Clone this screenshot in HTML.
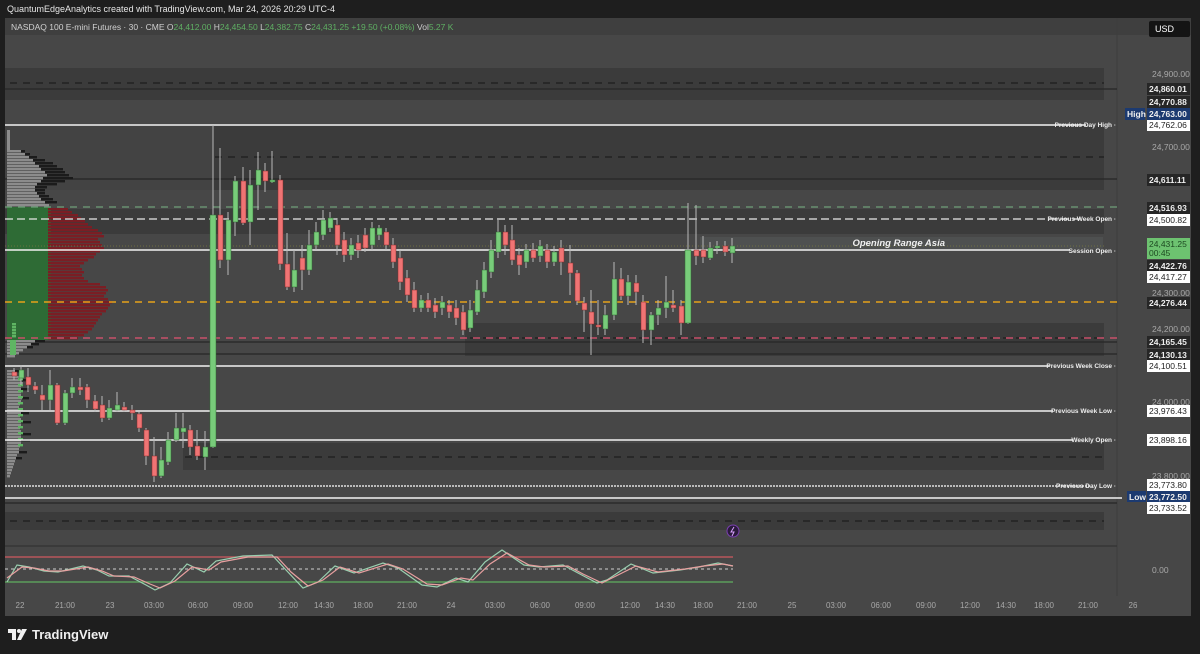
<!DOCTYPE html>
<html><head><meta charset="utf-8"><style>
html,body{margin:0;padding:0;background:#1e1e1e;width:1200px;height:654px;overflow:hidden}
svg{display:block}
text{font-family:"Liberation Sans",sans-serif}
</style></head><body>
<svg width="1200" height="654" viewBox="0 0 1200 654" xmlns="http://www.w3.org/2000/svg">
<rect width="1200" height="654" fill="#1e1e1e"/>
<text x="7" y="12" font-size="9" fill="#e6e6e6">QuantumEdgeAnalytics created with TradingView.com, Mar 24, 2026 20:29 UTC-4</text>
<rect x="5" y="18" width="1186" height="598" fill="#474747"/>
<rect x="5" y="18" width="1186" height="17" fill="#3f3f3f"/>
<text x="11" y="30" font-size="8.5" fill="#d0d0d0">NASDAQ 100 E-mini Futures · 30 · CME  <tspan fill="#ccc">O</tspan><tspan fill="#5fb063">24,412.00</tspan> <tspan fill="#ccc">H</tspan><tspan fill="#5fb063">24,454.50</tspan> <tspan fill="#ccc">L</tspan><tspan fill="#5fb063">24,382.75</tspan> <tspan fill="#ccc">C</tspan><tspan fill="#5fb063">24,431.25 +19.50 (+0.08%)</tspan> <tspan fill="#ccc">Vol</tspan><tspan fill="#5fb063">5.27 K</tspan></text>
<rect x="1149" y="21" width="41" height="16" rx="2" fill="#141414"/>
<text x="1155" y="32" font-size="9" fill="#fff">USD</text>
<line x1="1117" y1="18" x2="1117" y2="596" stroke="#3d3d3d"/>

<g fill="#3b3b3b">
<rect x="5" y="68" width="1099" height="32"/>
<rect x="213" y="126" width="891" height="64"/>
<rect x="5" y="209" width="1099" height="25"/>
<rect x="465" y="323" width="639" height="33"/>
<rect x="183" y="443" width="921" height="27"/>
<rect x="5" y="512" width="1099" height="18"/>
</g>
<rect x="5" y="126" width="208" height="64" fill="#434343"/>
<g stroke="#1e1e1e" stroke-width="1.2" stroke-dasharray="7,6">
<line x1="10" y1="83" x2="1104" y2="83"/>
<line x1="215" y1="157" x2="1104" y2="157"/>
<line x1="470" y1="338" x2="1104" y2="338"/>
<line x1="185" y1="457" x2="1104" y2="457"/>
<line x1="10" y1="521" x2="1104" y2="521"/>
</g>
<g stroke="#262626" stroke-width="1.2">
<line x1="5" y1="89" x2="1117" y2="89"/>
<line x1="5" y1="179" x2="1117" y2="179"/>
<line x1="5" y1="342" x2="1117" y2="342"/>
<line x1="5" y1="354" x2="1117" y2="354"/>
<line x1="5" y1="503" x2="1117" y2="503"/>
</g>

<!-- volume profile -->
<g fill="#8c8c8c">
<rect x="7" y="130" width="3" height="20"/>
<rect x="7" y="150" width="14" height="2.4"/><rect x="7" y="153" width="18" height="2.4"/><rect x="7" y="156" width="22" height="2.4"/><rect x="7" y="159" width="26" height="2.4"/><rect x="7" y="162" width="28" height="2.4"/><rect x="7" y="165" width="32" height="2.4"/><rect x="7" y="168" width="34" height="2.4"/><rect x="7" y="171" width="38" height="2.4"/><rect x="7" y="174" width="40" height="2.4"/><rect x="7" y="177" width="36" height="2.4"/><rect x="7" y="180" width="34" height="2.4"/><rect x="7" y="183" width="30" height="2.4"/><rect x="7" y="186" width="28" height="2.4"/><rect x="7" y="189" width="28" height="2.4"/><rect x="7" y="192" width="30" height="2.4"/><rect x="7" y="195" width="32" height="2.4"/><rect x="7" y="198" width="34" height="2.4"/><rect x="7" y="201" width="38" height="2.4"/><rect x="7" y="204" width="42" height="2.4"/>
</g>
<g fill="#1b1b1b">
<rect x="21" y="150" width="4" height="2.4"/><rect x="25" y="153" width="5" height="2.4"/><rect x="29" y="156" width="8" height="2.4"/><rect x="33" y="159" width="12" height="2.4"/><rect x="35" y="162" width="18" height="2.4"/><rect x="39" y="165" width="18" height="2.4"/><rect x="41" y="168" width="22" height="2.4"/><rect x="45" y="171" width="20" height="2.4"/><rect x="47" y="174" width="22" height="2.4"/><rect x="43" y="177" width="30" height="2.4"/><rect x="41" y="180" width="24" height="2.4"/><rect x="37" y="183" width="20" height="2.4"/><rect x="35" y="186" width="12" height="2.4"/><rect x="35" y="189" width="10" height="2.4"/><rect x="37" y="192" width="8" height="2.4"/><rect x="39" y="195" width="10" height="2.4"/><rect x="41" y="198" width="12" height="2.4"/><rect x="45" y="201" width="12" height="2.4"/>
</g>
<rect x="7" y="207" width="44" height="133" fill="#2e6b35"/>
<g fill="#7a1e24">
<rect x="48" y="208" width="20" height="2.4"/><rect x="48" y="211" width="24" height="2.4"/><rect x="48" y="214" width="30" height="2.4"/><rect x="48" y="217" width="33" height="2.4"/><rect x="48" y="220" width="37" height="2.4"/><rect x="48" y="223" width="40" height="2.4"/><rect x="48" y="226" width="44" height="2.4"/><rect x="48" y="229" width="50" height="2.4"/><rect x="48" y="232" width="54" height="2.4"/><rect x="48" y="235" width="56" height="2.4"/><rect x="48" y="238" width="50" height="2.4"/><rect x="48" y="241" width="52" height="2.4"/><rect x="48" y="244" width="54" height="2.4"/><rect x="48" y="247" width="56" height="2.4"/><rect x="48" y="250" width="52" height="2.4"/><rect x="48" y="253" width="48" height="2.4"/><rect x="48" y="256" width="46" height="2.4"/><rect x="48" y="259" width="40" height="2.4"/><rect x="48" y="262" width="36" height="2.4"/><rect x="48" y="265" width="32" height="2.4"/><rect x="48" y="268" width="34" height="2.4"/><rect x="48" y="271" width="36" height="2.4"/><rect x="48" y="274" width="34" height="2.4"/><rect x="48" y="277" width="36" height="2.4"/><rect x="48" y="280" width="40" height="2.4"/><rect x="48" y="283" width="52" height="2.4"/><rect x="48" y="286" width="58" height="2.4"/><rect x="48" y="289" width="60" height="2.4"/><rect x="48" y="292" width="58" height="2.4"/><rect x="48" y="295" width="56" height="2.4"/><rect x="48" y="298" width="60" height="2.4"/><rect x="48" y="301" width="64" height="2.4"/><rect x="48" y="304" width="62" height="2.4"/><rect x="48" y="307" width="60" height="2.4"/><rect x="48" y="310" width="58" height="2.4"/><rect x="48" y="313" width="54" height="2.4"/><rect x="48" y="316" width="52" height="2.4"/><rect x="48" y="319" width="50" height="2.4"/><rect x="48" y="322" width="48" height="2.4"/><rect x="48" y="325" width="46" height="2.4"/><rect x="48" y="328" width="44" height="2.4"/><rect x="48" y="331" width="40" height="2.4"/><rect x="48" y="334" width="36" height="2.4"/><rect x="48" y="337" width="30" height="2.4"/>
</g>
<g fill="#8c8c8c">
<rect x="7" y="340" width="28" height="2.4"/><rect x="7" y="343" width="24" height="2.4"/><rect x="7" y="346" width="20" height="2.4"/><rect x="7" y="349" width="16" height="2.4"/><rect x="7" y="352" width="12" height="2.4"/><rect x="7" y="355" width="8" height="2.4"/>
<rect x="7" y="370" width="8" height="2.4"/><rect x="7" y="373" width="10" height="2.4"/><rect x="7" y="376" width="12" height="2.4"/><rect x="7" y="379" width="14" height="2.4"/><rect x="7" y="382" width="16" height="2.4"/><rect x="7" y="385" width="14" height="2.4"/><rect x="7" y="388" width="16" height="2.4"/><rect x="7" y="391" width="14" height="2.4"/><rect x="7" y="394" width="14" height="2.4"/><rect x="7" y="397" width="15" height="2.4"/><rect x="7" y="400" width="14" height="2.4"/><rect x="7" y="403" width="13" height="2.4"/><rect x="7" y="406" width="12" height="2.4"/><rect x="7" y="409" width="13" height="2.4"/><rect x="7" y="412" width="14" height="2.4"/><rect x="7" y="415" width="13" height="2.4"/><rect x="7" y="418" width="14" height="2.4"/><rect x="7" y="421" width="15" height="2.4"/><rect x="7" y="424" width="14" height="2.4"/><rect x="7" y="427" width="13" height="2.4"/><rect x="7" y="430" width="14" height="2.4"/><rect x="7" y="433" width="15" height="2.4"/><rect x="7" y="436" width="14" height="2.4"/><rect x="7" y="439" width="15" height="2.4"/><rect x="7" y="442" width="14" height="2.4"/><rect x="7" y="445" width="13" height="2.4"/><rect x="7" y="448" width="12" height="2.4"/><rect x="7" y="451" width="12" height="2.4"/><rect x="7" y="454" width="10" height="2.4"/><rect x="7" y="457" width="9" height="2.4"/><rect x="7" y="460" width="8" height="2.4"/><rect x="7" y="463" width="7" height="2.4"/><rect x="7" y="466" width="6" height="2.4"/><rect x="7" y="469" width="5" height="2.4"/><rect x="7" y="472" width="4" height="2.4"/><rect x="7" y="475" width="3" height="2.4"/>
</g>
<g fill="#1b1b1b">
<rect x="35" y="340" width="10" height="2.4"/><rect x="31" y="343" width="8" height="2.4"/><rect x="27" y="346" width="6" height="2.4"/><rect x="15" y="370" width="4" height="2.4"/><rect x="21" y="379" width="6" height="2.4"/><rect x="21" y="388" width="8" height="2.4"/><rect x="22" y="397" width="7" height="2.4"/><rect x="21" y="412" width="8" height="2.4"/><rect x="21" y="421" width="10" height="2.4"/><rect x="21" y="433" width="10" height="2.4"/><rect x="21" y="439" width="9" height="2.4"/><rect x="19" y="451" width="8" height="2.4"/><rect x="16" y="457" width="6" height="2.4"/>
</g>
<g fill="#5fb563">
<rect x="12" y="323" width="4" height="2.4"/><rect x="12" y="326" width="4" height="2.4"/><rect x="12" y="329" width="4" height="2.4"/><rect x="12" y="332" width="4" height="2.4"/><rect x="12" y="335" width="4" height="2.4"/><rect x="10" y="340" width="6" height="15"/>
<rect x="18" y="378" width="5" height="2.4"/><rect x="18" y="384" width="5" height="2.4"/><rect x="18" y="390" width="5" height="2.4"/><rect x="18" y="396" width="5" height="2.4"/><rect x="18" y="402" width="5" height="2.4"/><rect x="18" y="408" width="5" height="2.4"/><rect x="18" y="414" width="5" height="2.4"/><rect x="18" y="420" width="5" height="2.4"/><rect x="18" y="426" width="5" height="2.4"/><rect x="18" y="432" width="5" height="2.4"/><rect x="18" y="438" width="5" height="2.4"/><rect x="18" y="444" width="5" height="2.4"/>
</g>

<line x1="5" y1="207" x2="1117" y2="207" stroke="#6fa07a" stroke-width="1.2" stroke-dasharray="7,6"/>
<line x1="5" y1="219" x2="1080" y2="219" stroke="#e8e8e8" stroke-width="1.2" stroke-dasharray="8,4"/>
<line x1="5" y1="302" x2="1117" y2="302" stroke="#e6a21a" stroke-width="1.4" stroke-dasharray="7,6"/>
<line x1="5" y1="338" x2="1117" y2="338" stroke="#c8506a" stroke-width="1.4" stroke-dasharray="7,6"/>
<g stroke="#f2f2f2" stroke-width="1.6">
<line x1="5" y1="125" x2="1086" y2="125"/>
<line x1="5" y1="250" x2="1070" y2="250"/>
<line x1="5" y1="366" x2="1050" y2="366"/>
<line x1="5" y1="411" x2="1053" y2="411"/>
<line x1="5" y1="440" x2="1073" y2="440"/>
<line x1="5" y1="498" x2="1122" y2="498"/>
</g>
<line x1="5" y1="486" x2="1090" y2="486" stroke="#e0e0e0" stroke-width="1.4" stroke-dasharray="2,1"/>
<rect x="700" y="237" width="403" height="12" fill="#505252" opacity="0.8"/>
<line x1="5" y1="246" x2="1104" y2="246" stroke="#7a7a40" stroke-width="0.8" stroke-dasharray="1,2"/>
<text x="945" y="246" font-size="9.5" font-style="italic" fill="#f0f0f0" text-anchor="end" font-weight="bold">Opening Range Asia</text>

<g font-size="6.5" fill="#eee" text-anchor="end" font-weight="bold">
<text x="1116" y="127">Previous Day High ·</text>
<text x="1116" y="221">Previous Week Open ·</text>
<text x="1116" y="253">Session Open ·</text>
<text x="1116" y="368">Previous Week Close ·</text>
<text x="1116" y="413">Previous Week Low ·</text>
<text x="1116" y="442">Weekly Open ·</text>
<text x="1116" y="488">Previous Day Low ·</text>
</g>

<!-- candles -->
<g stroke="#b8b8b8" stroke-width="1">
<line x1="14" y1="368" x2="14" y2="380"/><line x1="21" y1="365" x2="21" y2="385"/><line x1="28" y1="368" x2="28" y2="392"/><line x1="35" y1="382" x2="35" y2="394"/><line x1="42" y1="385" x2="42" y2="410"/><line x1="50" y1="370" x2="50" y2="410"/><line x1="57" y1="383" x2="57" y2="425"/><line x1="65" y1="390" x2="65" y2="425"/><line x1="72" y1="378" x2="72" y2="398"/><line x1="80" y1="378" x2="80" y2="395"/><line x1="87" y1="384" x2="87" y2="408"/><line x1="95" y1="395" x2="95" y2="412"/><line x1="102" y1="396" x2="102" y2="422"/><line x1="109" y1="400" x2="109" y2="420"/><line x1="117" y1="392" x2="117" y2="412"/><line x1="124" y1="402" x2="124" y2="412"/><line x1="132" y1="405" x2="132" y2="420"/><line x1="139" y1="412" x2="139" y2="432"/><line x1="146" y1="428" x2="146" y2="465"/><line x1="154" y1="437" x2="154" y2="482"/><line x1="161" y1="447" x2="161" y2="478"/><line x1="168" y1="432" x2="168" y2="465"/><line x1="176" y1="413" x2="176" y2="442"/><line x1="183" y1="413" x2="183" y2="448"/><line x1="190" y1="425" x2="190" y2="455"/><line x1="197" y1="430" x2="197" y2="460"/><line x1="205" y1="431" x2="205" y2="470"/><line x1="213" y1="125" x2="213" y2="448"/><line x1="220" y1="148" x2="220" y2="268"/><line x1="228" y1="212" x2="228" y2="275"/><line x1="235" y1="176" x2="235" y2="236"/><line x1="243" y1="167" x2="243" y2="225"/><line x1="250" y1="170" x2="250" y2="245"/><line x1="258" y1="152" x2="258" y2="210"/><line x1="265" y1="163" x2="265" y2="192"/><line x1="272" y1="151" x2="272" y2="183"/><line x1="280" y1="175" x2="280" y2="270"/><line x1="287" y1="233" x2="287" y2="290"/><line x1="294" y1="250" x2="294" y2="292"/>
<line x1="302" y1="245" x2="302" y2="290"/><line x1="309" y1="230" x2="309" y2="275"/><line x1="316" y1="222" x2="316" y2="250"/><line x1="323" y1="210" x2="323" y2="240"/><line x1="330" y1="212" x2="330" y2="232"/><line x1="337" y1="218" x2="337" y2="255"/><line x1="344" y1="232" x2="344" y2="262"/><line x1="351" y1="238" x2="351" y2="260"/><line x1="358" y1="235" x2="358" y2="258"/><line x1="365" y1="228" x2="365" y2="252"/><line x1="372" y1="222" x2="372" y2="250"/><line x1="379" y1="225" x2="379" y2="240"/><line x1="386" y1="228" x2="386" y2="250"/><line x1="393" y1="238" x2="393" y2="268"/><line x1="400" y1="250" x2="400" y2="290"/><line x1="407" y1="270" x2="407" y2="302"/><line x1="414" y1="282" x2="414" y2="312"/><line x1="421" y1="295" x2="421" y2="312"/><line x1="428" y1="293" x2="428" y2="312"/><line x1="435" y1="298" x2="435" y2="318"/><line x1="442" y1="296" x2="442" y2="315"/><line x1="449" y1="300" x2="449" y2="318"/><line x1="456" y1="300" x2="456" y2="325"/><line x1="463" y1="305" x2="463" y2="335"/><line x1="470" y1="300" x2="470" y2="332"/><line x1="477" y1="280" x2="477" y2="315"/><line x1="484" y1="262" x2="484" y2="298"/><line x1="491" y1="240" x2="491" y2="278"/><line x1="498" y1="220" x2="498" y2="258"/><line x1="505" y1="225" x2="505" y2="255"/><line x1="512" y1="225" x2="512" y2="265"/><line x1="519" y1="248" x2="519" y2="275"/><line x1="526" y1="244" x2="526" y2="268"/><line x1="533" y1="243" x2="533" y2="262"/><line x1="540" y1="240" x2="540" y2="262"/><line x1="547" y1="244" x2="547" y2="268"/><line x1="554" y1="246" x2="554" y2="266"/><line x1="561" y1="240" x2="561" y2="275"/>
<line x1="570" y1="245" x2="570" y2="295"/><line x1="577" y1="270" x2="577" y2="305"/><line x1="584" y1="297" x2="584" y2="332"/><line x1="591" y1="290" x2="591" y2="355"/><line x1="598" y1="300" x2="598" y2="335"/><line x1="605" y1="305" x2="605" y2="335"/><line x1="614" y1="262" x2="614" y2="320"/><line x1="621" y1="268" x2="621" y2="300"/><line x1="628" y1="275" x2="628" y2="305"/><line x1="636" y1="275" x2="636" y2="305"/><line x1="643" y1="295" x2="643" y2="343"/><line x1="651" y1="312" x2="651" y2="345"/><line x1="658" y1="300" x2="658" y2="325"/><line x1="666" y1="276" x2="666" y2="318"/><line x1="673" y1="290" x2="673" y2="312"/><line x1="681" y1="300" x2="681" y2="335"/><line x1="688" y1="203" x2="688" y2="324"/><line x1="696" y1="205" x2="696" y2="265"/><line x1="703" y1="236" x2="703" y2="263"/><line x1="710" y1="242" x2="710" y2="260"/><line x1="717" y1="241" x2="717" y2="254"/><line x1="725" y1="241" x2="725" y2="256"/><line x1="732" y1="238" x2="732" y2="263"/>
</g>
<g fill="#f07474" stroke="#8a2a2a" stroke-width="0.5">
<rect x="12" y="372" width="5" height="4"/><rect x="26" y="377" width="5" height="8"/><rect x="33" y="386" width="5" height="4"/><rect x="40" y="395" width="5" height="5"/><rect x="55" y="385" width="5" height="38"/><rect x="78" y="387" width="5" height="3"/><rect x="85" y="387" width="5" height="13"/><rect x="93" y="401" width="5" height="8"/><rect x="100" y="405" width="5" height="13"/><rect x="122" y="407" width="5" height="3"/><rect x="130" y="410" width="5" height="3"/><rect x="137" y="414" width="5" height="14"/><rect x="144" y="430" width="5" height="26"/><rect x="152" y="456" width="5" height="20"/><rect x="188" y="430" width="5" height="17"/><rect x="195" y="446" width="5" height="10"/><rect x="218" y="215" width="5" height="45"/><rect x="241" y="181" width="5" height="42"/><rect x="263" y="171" width="5" height="10"/><rect x="278" y="180" width="5" height="84"/><rect x="285" y="264" width="5" height="23"/>
<rect x="300" y="258" width="5" height="12"/><rect x="335" y="225" width="5" height="20"/><rect x="342" y="240" width="5" height="15"/><rect x="356" y="243" width="5" height="7"/><rect x="363" y="235" width="5" height="13"/><rect x="384" y="232" width="5" height="13"/><rect x="391" y="245" width="5" height="17"/><rect x="398" y="258" width="5" height="24"/><rect x="405" y="278" width="5" height="17"/><rect x="412" y="290" width="5" height="18"/><rect x="426" y="300" width="5" height="8"/><rect x="433" y="305" width="5" height="7"/><rect x="447" y="305" width="5" height="7"/><rect x="454" y="308" width="5" height="10"/><rect x="461" y="312" width="5" height="18"/><rect x="503" y="232" width="5" height="13"/><rect x="510" y="240" width="5" height="20"/><rect x="517" y="255" width="5" height="10"/><rect x="531" y="250" width="5" height="8"/><rect x="545" y="250" width="5" height="12"/><rect x="559" y="248" width="5" height="14"/>
<rect x="568" y="263" width="5" height="10"/><rect x="575" y="273" width="5" height="28"/><rect x="582" y="303" width="5" height="7"/><rect x="589" y="312" width="5" height="12"/><rect x="596" y="325" width="5" height="2"/><rect x="619" y="279" width="5" height="17"/><rect x="634" y="283" width="5" height="9"/><rect x="641" y="302" width="5" height="28"/><rect x="671" y="305" width="5" height="3"/><rect x="679" y="306" width="5" height="17"/><rect x="694" y="250" width="5" height="6"/><rect x="701" y="250" width="5" height="7"/><rect x="723" y="246" width="5" height="6"/>
</g>
<g fill="#78cc7a" stroke="#2e6a30" stroke-width="0.5">
<rect x="19" y="370" width="5" height="8"/><rect x="48" y="385" width="5" height="15"/><rect x="63" y="393" width="5" height="30"/><rect x="70" y="387" width="5" height="6"/><rect x="107" y="408" width="5" height="10"/><rect x="115" y="405" width="5" height="5"/><rect x="159" y="460" width="5" height="16"/><rect x="166" y="440" width="5" height="22"/><rect x="174" y="428" width="5" height="12"/><rect x="181" y="428" width="5" height="4"/><rect x="203" y="447" width="5" height="10"/><rect x="210" y="215" width="6" height="232"/><rect x="226" y="220" width="5" height="40"/><rect x="233" y="181" width="5" height="41"/><rect x="248" y="185" width="5" height="37"/><rect x="256" y="170" width="5" height="15"/><rect x="270" y="180" width="5" height="2"/><rect x="292" y="270" width="5" height="17"/>
<rect x="307" y="245" width="5" height="25"/><rect x="314" y="232" width="5" height="13"/><rect x="321" y="220" width="5" height="15"/><rect x="328" y="218" width="5" height="10"/><rect x="349" y="245" width="5" height="10"/><rect x="370" y="228" width="5" height="17"/><rect x="377" y="228" width="5" height="7"/><rect x="419" y="300" width="5" height="8"/><rect x="440" y="302" width="5" height="6"/><rect x="468" y="310" width="5" height="18"/><rect x="475" y="290" width="5" height="22"/><rect x="482" y="270" width="5" height="22"/><rect x="489" y="250" width="5" height="22"/><rect x="496" y="232" width="5" height="20"/><rect x="524" y="250" width="5" height="12"/><rect x="538" y="246" width="5" height="10"/><rect x="552" y="252" width="5" height="10"/>
<rect x="603" y="315" width="5" height="14"/><rect x="612" y="279" width="5" height="36"/><rect x="626" y="282" width="5" height="14"/><rect x="649" y="315" width="5" height="15"/><rect x="656" y="308" width="5" height="7"/><rect x="664" y="302" width="5" height="6"/><rect x="685" y="250" width="6" height="73"/><rect x="708" y="248" width="5" height="10"/><rect x="715" y="246" width="5" height="2"/><rect x="730" y="246" width="5" height="7"/>
</g>

<g font-size="8.5" font-family="Liberation Sans">
<g fill="#a8a8a8"><text x="1152" y="77">24,900.00</text><text x="1152" y="150">24,700.00</text><text x="1152" y="296">24,300.00</text><text x="1152" y="332">24,200.00</text><text x="1152" y="405">24,000.00</text><text x="1152" y="479">23,800.00</text><text x="1152" y="573">0.00</text></g>
<g fill="#262626"><rect x="1147" y="83" width="43" height="12"/><rect x="1147" y="96" width="43" height="12"/><rect x="1147" y="174" width="43" height="12"/><rect x="1147" y="202" width="43" height="12"/><rect x="1147" y="260" width="43" height="12"/><rect x="1147" y="297" width="43" height="12"/><rect x="1147" y="336" width="43" height="12"/><rect x="1147" y="349" width="43" height="12"/></g>
<g fill="#fff"><rect x="1147" y="119" width="43" height="12"/><rect x="1147" y="214" width="43" height="12"/><rect x="1147" y="271" width="43" height="12"/><rect x="1147" y="360" width="43" height="12"/><rect x="1147" y="405" width="43" height="12"/><rect x="1147" y="434" width="43" height="12"/><rect x="1147" y="479" width="43" height="12"/><rect x="1147" y="502" width="43" height="12"/></g>
<rect x="1125" y="108" width="20" height="12" fill="#1c3a70"/><rect x="1147" y="108" width="43" height="12" fill="#1c3a70"/>
<rect x="1127" y="491" width="19" height="11" fill="#1c3a70"/><rect x="1147" y="491" width="43" height="11" fill="#1c3a70"/>
<rect x="1147" y="238" width="43" height="21" fill="#6dc270"/>
<g fill="#eee" font-weight="bold"><text x="1149" y="92">24,860.01</text><text x="1149" y="105">24,770.88</text><text x="1149" y="183">24,611.11</text><text x="1149" y="211">24,516.93</text><text x="1149" y="269">24,422.76</text><text x="1149" y="306">24,276.44</text><text x="1149" y="345">24,165.45</text><text x="1149" y="358">24,130.13</text><text x="1149" y="117">24,763.00</text><text x="1127" y="117">High</text><text x="1149" y="500">23,772.50</text><text x="1129" y="500">Low</text></g>
<g fill="#222"><text x="1149" y="128">24,762.06</text><text x="1149" y="223">24,500.82</text><text x="1149" y="280">24,417.27</text><text x="1149" y="369">24,100.51</text><text x="1149" y="414">23,976.43</text><text x="1149" y="443">23,898.16</text><text x="1149" y="488">23,773.80</text><text x="1149" y="511">23,733.52</text></g>
<text x="1149" y="247" fill="#1e4a22">24,431.25</text><text x="1149" y="256" fill="#1e4a22">00:45</text>
</g>

<circle cx="733" cy="531" r="6" fill="#2a1a3a" stroke="#7a3fb0"/>
<path d="M734 527 L731 532 L734 532 L732 536" stroke="#d8a0ff" fill="none" stroke-width="1"/>

<line x1="5" y1="546" x2="1117" y2="546" stroke="#2e2e2e"/>
<line x1="5" y1="557" x2="733" y2="557" stroke="#d05a60" stroke-width="1.2"/>
<line x1="5" y1="582" x2="733" y2="582" stroke="#5fae5f" stroke-width="1.2"/>
<line x1="5" y1="569" x2="733" y2="569" stroke="#cfcfcf" stroke-width="1" stroke-dasharray="3,3"/>
<polyline fill="none" stroke="#9ad0b0" stroke-width="1.2" points="7,582 17,565 29,567 44,571 58,572 83,566 97,570 109,576 129,576 146,585 155,590 170,583 187,564 204,572 216,561 243,556 272,555 286,570 303,588 318,582 335,566 354,573 383,563 398,568 422,585 437,587 456,578 468,582 485,562 502,550 524,565 539,567 563,565 578,573 597,583 607,580 631,564 653,573 680,570 699,567 718,563 733,566"/>
<polyline fill="none" stroke="#e8a0a0" stroke-width="1.2" points="7,578 22,567 34,568 49,571 63,571 88,567 102,571 114,576 134,577 150,584 160,588 175,581 192,567 209,570 221,562 248,557 277,557 291,572 308,586 323,580 340,567 359,573 388,564 403,569 427,584 442,585 461,578 473,580 490,564 507,553 529,565 544,567 568,566 583,574 602,583 612,578 636,566 658,572 685,569 704,566 723,564 733,566"/>

<g font-size="8" fill="#a8a8a8" text-anchor="middle">
<text x="20" y="608">22</text><text x="65" y="608">21:00</text><text x="110" y="608">23</text><text x="154" y="608">03:00</text><text x="198" y="608">06:00</text><text x="243" y="608">09:00</text><text x="288" y="608">12:00</text><text x="324" y="608">14:30</text><text x="363" y="608">18:00</text><text x="407" y="608">21:00</text><text x="451" y="608">24</text><text x="495" y="608">03:00</text><text x="540" y="608">06:00</text><text x="585" y="608">09:00</text><text x="630" y="608">12:00</text><text x="665" y="608">14:30</text><text x="703" y="608">18:00</text><text x="747" y="608">21:00</text><text x="792" y="608">25</text><text x="836" y="608">03:00</text><text x="881" y="608">06:00</text><text x="926" y="608">09:00</text><text x="970" y="608">12:00</text><text x="1006" y="608">14:30</text><text x="1044" y="608">18:00</text><text x="1088" y="608">21:00</text><text x="1133" y="608">26</text>
</g>

<path d="M8 629 H16 V640 H12 V633 H8 Z" fill="#f0f0f0"/>
<circle cx="19" cy="631" r="2" fill="#f0f0f0"/>
<path d="M22 629 H27 L21 640 H17 Z" fill="#f0f0f0"/>
<text x="32" y="639" font-size="13" fill="#f0f0f0" font-weight="bold">TradingView</text>
</svg>
</body></html>
